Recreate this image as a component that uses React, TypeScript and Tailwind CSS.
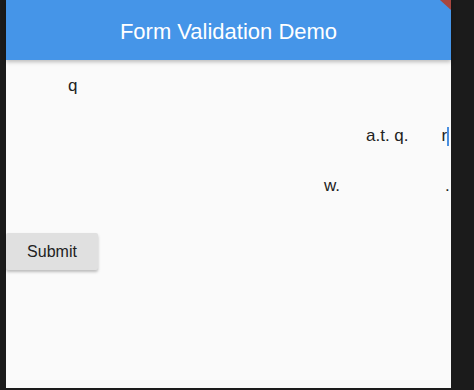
import React from 'react';

const App = () => {
  return (
    <div className="flex h-[390px] w-[474px] bg-[#1b1b1b] font-['Liberation_Sans',Arial,sans-serif]">
      <div className="w-[6px] shrink-0" />
      <div className="relative flex w-[445px] shrink-0 flex-col bg-[#fafafa] mb-[2px]">
        <div className="relative z-10 flex h-[60px] items-center justify-center bg-[#4595e8] shadow-[0_2px_4px_rgba(0,0,0,0.25)]">
          <h1 className="pt-[2px] text-[22px] text-white">Form Validation Demo</h1>
          <svg className="absolute right-0 top-0" width="14" height="12" viewBox="0 0 14 12">
            <polygon points="3,0 14,0 14,10" fill="#a8463f" />
          </svg>
        </div>

        <div className="flex h-[51px] items-center pl-[62px] text-[17px] text-[#222]">q</div>

        <div className="flex h-[50px] items-center text-[17px] text-[#222]">
          <span className="ml-[360px]">a.t. q.</span>
          <span className="ml-[33px]">r</span>
          <span className="h-[19px] w-[2px] bg-[#4a8fe0]" />
        </div>

        <div className="flex h-[50px] items-center text-[17px] text-[#222]">
          <span className="ml-[318px]">w.</span>
          <span className="ml-[105px]">.</span>
        </div>

        <div className="mt-[22px]">
          <button className="h-[37px] w-[92px] rounded-[2px] bg-[#e0e0e0] text-[16px] text-[#222] shadow-[0_2px_3px_rgba(0,0,0,0.25)]">
            Submit
          </button>
        </div>
      </div>
      <div className="flex-1" />
    </div>
  );
};

export default App;
